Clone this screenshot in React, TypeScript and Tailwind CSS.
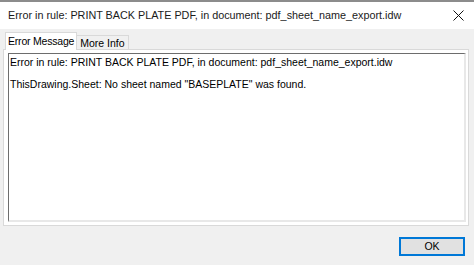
import React from 'react';

const TITLE = 'Error in rule: PRINT BACK PLATE PDF, in document: pdf_sheet_name_export.idw';

export default function App() {
  return (
    <div className="w-[474px] h-[265px] bg-[#f0f0f0] flex flex-col text-[#000] text-[10.5px] overflow-hidden" style={{ fontFamily: '"Liberation Sans", Arial, sans-serif' }}>
      {/* window top edge */}
      <div className="h-[2px] bg-[#8c8c8c] shrink-0" />

      {/* Title bar */}
      <div className="h-[27px] bg-white flex items-center justify-between pl-[8px] pr-[10px] shrink-0">
        <span className="text-[10.8px] whitespace-nowrap text-[#1a1a1a]">{TITLE}</span>
        <svg width="11" height="11" viewBox="0 0 11 11" className="text-[#111]">
          <path d="M0.5 0.5 L10.5 10.5 M10.5 0.5 L0.5 10.5" stroke="currentColor" strokeWidth="1" />
        </svg>
      </div>

      {/* Body */}
      <div className="flex flex-col px-[3px] pt-[3px] grow">
        {/* Tabs */}
        <div className="flex items-end h-[17px] pl-[2px]">
          <div className="relative z-10 -mb-px h-[18px] bg-white border border-b-0 border-[#d9d9d9] px-[2px] flex items-center whitespace-nowrap tracking-[-0.2px]">
            Error Message
          </div>
          <div className="h-[14px] bg-[#f0f0f0] border border-l-0 border-b-0 border-[#d9d9d9] px-[3px] pt-[2px] flex items-center whitespace-nowrap">
            More Info
          </div>
        </div>

        {/* Tab panel */}
        <div className="w-[466px] h-[177px] bg-white border border-[#d9d9d9] pl-[4px] pr-[2px] pt-[3px] pb-[3px]">
          <div className="h-full border-t border-l border-t-[#6d6d6d] border-l-[#6d6d6d] border-r-2 border-b-2 border-r-[#e8e8e8] border-b-[#e8e8e8] pl-[1px] pt-[3px] leading-[11px]">
            <div>{TITLE}</div>
            <div className="mt-[11px]">ThisDrawing.Sheet: No sheet named "BASEPLATE" was found.</div>
          </div>
        </div>

        {/* Footer */}
        <div className="flex justify-end pr-[6px] pt-[11px]">
          <button className="w-[66px] h-[19px] border-2 border-[#0078d7] bg-[#e1e1e1] flex items-center justify-center text-[10.5px] leading-none">
            OK
          </button>
        </div>
      </div>
    </div>
  );
}
